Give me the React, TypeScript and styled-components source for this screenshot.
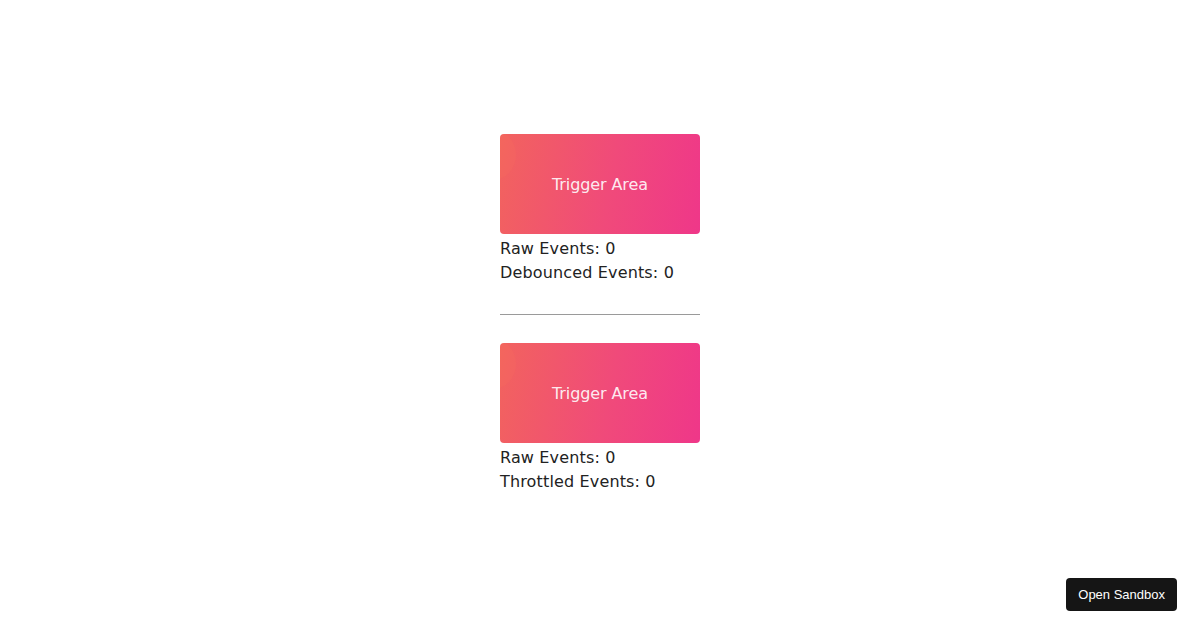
import React from "react";
import styled, { createGlobalStyle } from "styled-components";

const GlobalStyle = createGlobalStyle`
  html, body {
    margin: 0;
    padding: 0;
    background: #ffffff;
  }
  body {
    font-family: "DejaVu Sans", "Noto Sans", sans-serif;
    color: #222222;
  }
`;

interface IDemo {
  label: string;
}

const Demo = ({ label }: IDemo) => {
  return (
    <Section>
      <TriggerCard>
        <Glow />
        <CardLabel>Trigger Area</CardLabel>
      </TriggerCard>
      <Counter>Raw Events: 0</Counter>
      <Counter>{label} Events: 0</Counter>
    </Section>
  );
};

const App = () => {
  return (
    <>
      <GlobalStyle />
      <Page>
        <Column>
          <Demo label="Debounced" />
          <Divider />
          <Demo label="Throttled" />
        </Column>
      </Page>
      <SandboxButton>Open Sandbox</SandboxButton>
    </>
  );
};

const Page = styled.div`
  display: flex;
  justify-content: center;
  padding-top: 134px;
  min-height: 100vh;
  box-sizing: border-box;
`;

const Column = styled.div`
  display: flex;
  flex-direction: column;
  width: 200px;
`;

const Section = styled.div`
  display: flex;
  flex-direction: column;
`;

const TriggerCard = styled.div`
  position: relative;
  overflow: hidden;
  display: flex;
  justify-content: center;
  align-items: center;
  height: 100px;
  border-radius: 4px;
  background: linear-gradient(100deg, #f2635e 0%, #f04a7a 55%, #ef3789 100%);
  margin-bottom: 3px;
`;

const Glow = styled.span`
  position: absolute;
  left: -30px;
  top: -4px;
  width: 46px;
  height: 50px;
  border-radius: 50%;
  background: rgba(255, 120, 90, 0.14);
`;

const CardLabel = styled.span`
  position: relative;
  font-size: 16px;
  color: rgba(255, 255, 255, 0.9);
  letter-spacing: -0.1px;
`;

const Counter = styled.div`
  font-size: 16px;
  line-height: 24px;
  color: #222222;
  letter-spacing: 0.15px;
`;

const Divider = styled.hr`
  width: 100%;
  margin: 29px 0 28px;
  border: none;
  border-top: 1px solid #9a9a9a;
`;

const SandboxButton = styled.button`
  position: fixed;
  right: 23px;
  bottom: 19px;
  height: 33px;
  padding: 0 12px;
  border: none;
  border-radius: 4px;
  background: #151515;
  color: #ffffff;
  font-family: "Liberation Sans", Arial, sans-serif;
  font-size: 13px;
  cursor: pointer;
`;

export default App;
